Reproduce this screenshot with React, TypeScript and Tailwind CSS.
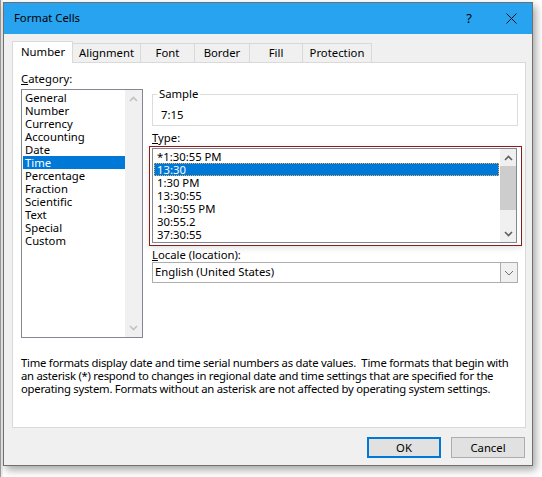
import React from 'react';

const FONT = { fontFamily: '"Segoe UI", "Noto Sans", "Open Sans", sans-serif' };

const categories = [
  'General',
  'Number',
  'Currency',
  'Accounting',
  'Date',
  'Time',
  'Percentage',
  'Fraction',
  'Scientific',
  'Text',
  'Special',
  'Custom',
];

const timeTypes = ['*1:30:55 PM', '13:30', '1:30 PM', '13:30:55', '1:30:55 PM', '30:55.2', '37:30:55'];

const tabs = ['Alignment', 'Font', 'Border', 'Fill', 'Protection'];
const tabWidths = ['w-[68px]', 'w-[54px]', 'w-[55px]', 'w-[53px]', 'w-[69px]'];

const ChevronUp: React.FC<{ color: string }> = ({ color }) => (
  <svg width="9" height="6" viewBox="0 0 9 6">
    <path d="M1 5 L4.5 1.5 L8 5" fill="none" stroke={color} strokeWidth="1.6" />
  </svg>
);

const ChevronDown: React.FC<{ color: string }> = ({ color }) => (
  <svg width="9" height="6" viewBox="0 0 9 6">
    <path d="M1 1 L4.5 4.5 L8 1" fill="none" stroke={color} strokeWidth="1.6" />
  </svg>
);

const App: React.FC = () => {
  return (
    <div className="w-[542px] h-[477px] bg-white flex text-[11.3px] text-black" style={FONT}>
      {/* what's behind the dialog on the left */}
      <div className="w-[3px] h-full bg-[#ececec] border-l border-[#9a9a9a]" />

      {/* Dialog window */}
      <div className="mt-[2px] w-[530px] h-[464px] border border-[#6f6f6f] bg-[#f0f0f0] flex flex-col shadow-[3px_4px_8px_rgba(0,0,0,0.35)]">
        {/* Title bar */}
        <div className="h-[31px] bg-[#27a3ef] flex items-center pl-[10px] pr-[12px]">
          <span className="text-[11.3px] text-black">Format Cells</span>
          <span className="ml-auto mr-[34px] text-[13px] text-black">?</span>
          <svg width="11" height="11" viewBox="0 0 11 11" className="mr-[3px]">
            <path d="M0.5 0.5 L10.5 10.5 M10.5 0.5 L0.5 10.5" stroke="#111" strokeWidth="1" />
          </svg>
        </div>

        <div className="flex flex-col pl-[8px] pr-[7px] pt-[7px]">
          {/* Tabs */}
          <div className="flex items-end h-[21px] relative z-10">
            <div className="w-[61px] h-[22px] bg-white border border-b-0 border-[#d9d9d9] flex items-center pl-[8px] -mb-px">
              Number
            </div>
            {tabs.map((t, i) => (
              <div
                key={t}
                className={`${tabWidths[i]} h-[19px] bg-[#f0f0f0] border border-b-0 border-l-0 border-[#d9d9d9] flex items-center justify-center`}
              >
                {t}
              </div>
            ))}
          </div>

          {/* Tab panel */}
          <div className="w-[514px] h-[366px] bg-white border border-[#d9d9d9] flex flex-col pl-[8px] pt-[8px]">
            <div className="flex">
              {/* Category column */}
              <div className="w-[122px] flex flex-col">
                <div className="h-[16px] leading-[16px]">
                  <span className="underline">C</span>ategory:
                </div>
                <div className="mt-[2px] h-[249px] border border-[#828790] flex">
                  <div className="flex-1 flex flex-col pt-[1px] pl-[1px]">
                    {categories.map((c) => (
                      <div
                        key={c}
                        className={`h-[13px] leading-[13px] pl-[2px] ${
                          c === 'Time' ? 'bg-[#0078d7] text-white' : ''
                        }`}
                      >
                        {c}
                      </div>
                    ))}
                  </div>
                  <div className="w-[17px] bg-[#f0f0f0] flex flex-col items-center justify-between py-[6px]">
                    <ChevronUp color="#c2c2c2" />
                    <ChevronDown color="#c2c2c2" />
                  </div>
                </div>
              </div>

              {/* Right column */}
              <div className="w-[366px] ml-[9px] flex flex-col">
                {/* Sample group */}
                <div className="mt-[23px] h-[32px] border border-[#dcdcdc] relative pl-[8px] pt-[12px]">
                  <span className="absolute left-[4px] -top-[9px] bg-white px-[2px] leading-[16px]">Sample</span>
                  <span className="leading-[16px]">7:15</span>
                </div>

                <div className="mt-[4px] h-[16px] leading-[16px]">
                  <span className="underline">T</span>ype:
                </div>

                {/* Type list with focus frame */}
                <div className="-ml-[3px] w-[373px] h-[100px] border border-[#8b1c1c] pl-[2px] pr-[4px] pt-[1px] pb-[2px] shadow-[0_2px_6px_rgba(0,0,0,0.12)]">
                  <div className="h-full border border-[#828790] flex">
                    <div className="flex-1 flex flex-col pt-[1px] pl-[1px] pr-[1px]">
                      {timeTypes.map((t) => (
                        <div
                          key={t}
                          className={`h-[13px] leading-[11px] pl-[2px] border ${
                            t === '13:30'
                              ? 'bg-[#0078d7] text-white border-dotted border-[#f3b04a]'
                              : 'border-transparent'
                          }`}
                        >
                          {t}
                        </div>
                      ))}
                    </div>
                    <div className="w-[16px] bg-[#f0f0f0] flex flex-col items-center">
                      <div className="h-[17px] flex items-center justify-center">
                        <ChevronUp color="#606060" />
                      </div>
                      <div className="w-full h-[44px] bg-[#cdcdcd]" />
                      <div className="mt-auto h-[17px] flex items-center justify-center">
                        <ChevronDown color="#606060" />
                      </div>
                    </div>
                  </div>
                </div>

                <div className="mt-[1px] h-[15px] leading-[15px]">
                  <span className="underline">L</span>ocale (location):
                </div>

                {/* Locale combobox */}
                <div className="h-[21px] border border-[#adadad] flex bg-white">
                  <div className="flex-1 flex items-center pl-[2px]">English (United States)</div>
                  <div className="w-[17px] bg-[#f0f0f0] border-l border-[#adadad] flex items-center justify-center">
                    <svg width="10" height="6" viewBox="0 0 10 6">
                      <path d="M1 1 L5 5 L9 1" fill="none" stroke="#707070" strokeWidth="1" />
                    </svg>
                  </div>
                </div>
              </div>
            </div>

            {/* Description */}
            <div className="mt-[18px] flex flex-col leading-[13px] whitespace-pre tracking-[-0.25px]">
              <div>Time formats display date and time serial numbers as date values.  Time formats that begin with</div>
              <div>an asterisk (*) respond to changes in regional date and time settings that are specified for the</div>
              <div>operating system. Formats without an asterisk are not affected by operating system settings.</div>
            </div>
          </div>

          {/* Buttons */}
          <div className="mt-[9px] flex justify-end gap-[10px]">
            <button className="w-[74px] h-[21px] border-2 border-[#0078d7] bg-[#e1e1e1] text-[11.3px] leading-none">
              OK
            </button>
            <button className="w-[74px] h-[21px] border border-[#adadad] bg-[#e1e1e1] text-[11.3px] leading-none">
              Cancel
            </button>
          </div>
        </div>
      </div>
    </div>
  );
};

export default App;
